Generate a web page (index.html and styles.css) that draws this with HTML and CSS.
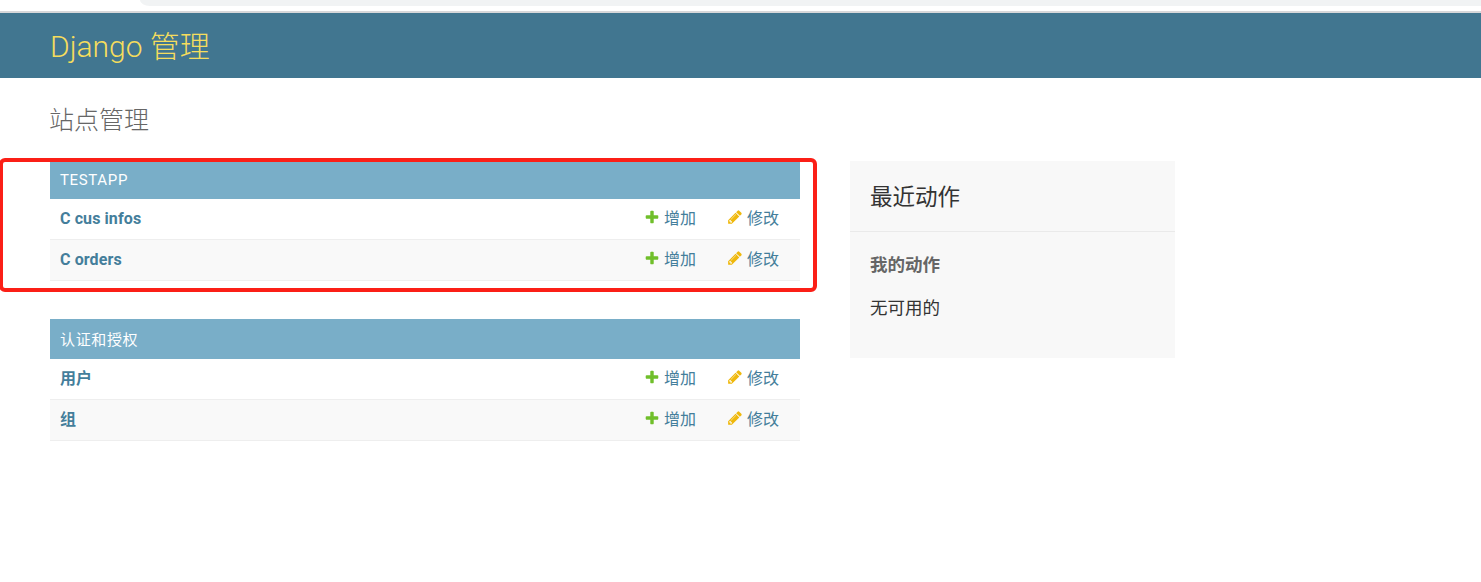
FILE: index.html
```html
<!DOCTYPE html>
<html lang="zh-CN">
  <head>
    <meta charset="UTF-8" />
    <title>站点管理 | Django 站点管理员</title>
    <link rel="stylesheet" href="styles.css">
  </head>
  <body>
    <div class="browser-strip">
      <div class="address-bar"></div>
    </div>

    <div id="header">
      <h1 class="branding">Django 管理</h1>
    </div>

    <div id="content">
      <h2 class="page-title">站点管理</h2>

      <div class="columns">
        <div class="main-col">
          <div class="module">
            <div class="caption">TESTAPP</div>
            <div class="row">
              <a class="model-name latin" href="#">C cus infos</a>
              <a class="addlink" href="#">
                <svg viewBox="0 0 1792 1792"><path fill="#70bf2b" d="M1600 796v192q0 40-28 68t-68 28h-416v416q0 40-28 68t-68 28h-192q-40 0-68-28t-28-68v-416h-416q-40 0-68-28t-28-68v-192q0-40 28-68t68-28h416v-416q0-40 28-68t68-28h192q40 0 68 28t28 68v416h416q40 0 68 28t28 68z"/></svg>
                增加
              </a>
              <a class="changelink" href="#">
                <svg viewBox="0 0 1792 1792"><path fill="#efb80b" d="M491 1536l91-91-235-235-91 91v107h128v128h107zm523-928q0-22-22-22-10 0-17 7l-542 542q-7 7-7 17 0 22 22 22 10 0 17-7l542-542q7-7 7-17zm-54-192l416 416-832 832h-416v-416zm683 96q0 53-37 90l-166 166-416-416 166-165q36-38 90-38 53 0 91 38l235 234q37 39 37 91z"/></svg>
                修改
              </a>
            </div>
            <div class="row alt">
              <a class="model-name latin" href="#">C orders</a>
              <a class="addlink" href="#">
                <svg viewBox="0 0 1792 1792"><path fill="#70bf2b" d="M1600 796v192q0 40-28 68t-68 28h-416v416q0 40-28 68t-68 28h-192q-40 0-68-28t-28-68v-416h-416q-40 0-68-28t-28-68v-192q0-40 28-68t68-28h416v-416q0-40 28-68t68-28h192q40 0 68 28t28 68v416h416q40 0 68 28t28 68z"/></svg>
                增加
              </a>
              <a class="changelink" href="#">
                <svg viewBox="0 0 1792 1792"><path fill="#efb80b" d="M491 1536l91-91-235-235-91 91v107h128v128h107zm523-928q0-22-22-22-10 0-17 7l-542 542q-7 7-7 17 0 22 22 22 10 0 17-7l542-542q7-7 7-17zm-54-192l416 416-832 832h-416v-416zm683 96q0 53-37 90l-166 166-416-416 166-165q36-38 90-38 53 0 91 38l235 234q37 39 37 91z"/></svg>
                修改
              </a>
            </div>
          </div>

          <div class="module">
            <div class="caption cjk">认证和授权</div>
            <div class="row">
              <a class="model-name" href="#">用户</a>
              <a class="addlink" href="#">
                <svg viewBox="0 0 1792 1792"><path fill="#70bf2b" d="M1600 796v192q0 40-28 68t-68 28h-416v416q0 40-28 68t-68 28h-192q-40 0-68-28t-28-68v-416h-416q-40 0-68-28t-28-68v-192q0-40 28-68t68-28h416v-416q0-40 28-68t68-28h192q40 0 68 28t28 68v416h416q40 0 68 28t28 68z"/></svg>
                增加
              </a>
              <a class="changelink" href="#">
                <svg viewBox="0 0 1792 1792"><path fill="#efb80b" d="M491 1536l91-91-235-235-91 91v107h128v128h107zm523-928q0-22-22-22-10 0-17 7l-542 542q-7 7-7 17 0 22 22 22 10 0 17-7l542-542q7-7 7-17zm-54-192l416 416-832 832h-416v-416zm683 96q0 53-37 90l-166 166-416-416 166-165q36-38 90-38 53 0 91 38l235 234q37 39 37 91z"/></svg>
                修改
              </a>
            </div>
            <div class="row alt">
              <a class="model-name" href="#">组</a>
              <a class="addlink" href="#">
                <svg viewBox="0 0 1792 1792"><path fill="#70bf2b" d="M1600 796v192q0 40-28 68t-68 28h-416v416q0 40-28 68t-68 28h-192q-40 0-68-28t-28-68v-416h-416q-40 0-68-28t-28-68v-192q0-40 28-68t68-28h416v-416q0-40 28-68t68-28h192q40 0 68 28t28 68v416h416q40 0 68 28t28 68z"/></svg>
                增加
              </a>
              <a class="changelink" href="#">
                <svg viewBox="0 0 1792 1792"><path fill="#efb80b" d="M491 1536l91-91-235-235-91 91v107h128v128h107zm523-928q0-22-22-22-10 0-17 7l-542 542q-7 7-7 17 0 22 22 22 10 0 17-7l542-542q7-7 7-17zm-54-192l416 416-832 832h-416v-416zm683 96q0 53-37 90l-166 166-416-416 166-165q36-38 90-38 53 0 91 38l235 234q37 39 37 91z"/></svg>
                修改
              </a>
            </div>
          </div>
        </div>

        <div class="sidebar">
          <h2 class="sidebar-title">最近动作</h2>
          <div class="sidebar-body">
            <h3 class="sidebar-sub">我的动作</h3>
            <p class="sidebar-text">无可用的</p>
          </div>
        </div>
      </div>
    </div>

    <!-- red box drawn on the screenshot -->
    <div class="annotation"></div>
  </body>
</html>
```

FILE: styles.css
```css
* {
  box-sizing: border-box;
}
html,
body {
  height: 100%;
}
body {
  margin: 0;
  overflow: hidden;
  position: relative;
  background-color: #fff;
  color: #333;
  font-family: Roboto, "Noto Sans CJK SC", sans-serif;
  font-size: 14px;
}
a {
  text-decoration: none;
}

.browser-strip {
  height: 13px;
  border-bottom: 2px solid #d7d8da;
  padding-left: 140px;
}
.address-bar {
  height: 6px;
  background-color: #f1f3f4;
  border-bottom-left-radius: 10px 6px;
}

#header {
  height: 65px;
  background-color: #417690;
  padding: 3px 50px 0;
  display: flex;
  align-items: center;
}
.branding {
  margin: 0;
  color: #f5dd5d;
  font-size: 30px;
  font-weight: 300;
  line-height: 1.2;
}

#content {
  padding: 0 50px;
}
.page-title {
  margin: 0 0 0 -1px;
  padding-top: 25px;
  height: 83px;
  color: #666;
  font-size: 25px;
  font-weight: 300;
  line-height: 36px;
}

.columns {
  display: flex;
  gap: 50px;
  align-items: flex-start;
}
.main-col {
  width: 750px;
}

.module {
  margin-bottom: 38px;
}
.caption {
  height: 38px;
  padding: 0 10px;
  background-color: #79aec8;
  color: #fff;
  font-size: 15px;
  letter-spacing: 0.65px;
  line-height: 38px;
}
.caption.cjk {
  height: 40px;
  line-height: 42px;
}
.row {
  height: 41px;
  padding: 0 21px 5px 10px;
  display: flex;
  align-items: center;
  border-bottom: 1px solid #eee;
  font-size: 16px;
}
.row.alt {
  background-color: #f9f9f9;
}
.model-name {
  flex: 1;
  color: #447e9b;
  font-weight: 700;
  letter-spacing: 0.1px;
}
.model-name.latin {
  margin-top: 4px;
}
.addlink,
.changelink {
  display: flex;
  align-items: center;
  gap: 4px;
  color: #447e9b;
}
.addlink svg,
.changelink svg {
  width: 16px;
  height: 16px;
}
.addlink {
  margin-right: 31px;
}

.sidebar {
  width: 325px;
  height: 197px;
  background-color: #f8f8f8;
}
.sidebar-title {
  margin: 0;
  height: 71px;
  padding: 2px 20px 0;
  border-bottom: 1px solid #eaeaea;
  color: #333;
  font-size: 22.5px;
  font-weight: 400;
  line-height: 69px;
}
.sidebar-body {
  padding: 0 20px;
}
.sidebar-sub {
  margin: 0;
  padding-top: 19px;
  color: #666;
  font-size: 17.5px;
  font-weight: 700;
  line-height: 28px;
}
.sidebar-text {
  margin: 15px 0 0;
  color: #333;
  font-size: 17.5px;
  line-height: 28px;
}

.annotation {
  position: absolute;
  left: -1px;
  top: 158px;
  width: 818px;
  height: 134px;
  border: 4px solid #fb1f17;
  border-radius: 6px;
}
```
